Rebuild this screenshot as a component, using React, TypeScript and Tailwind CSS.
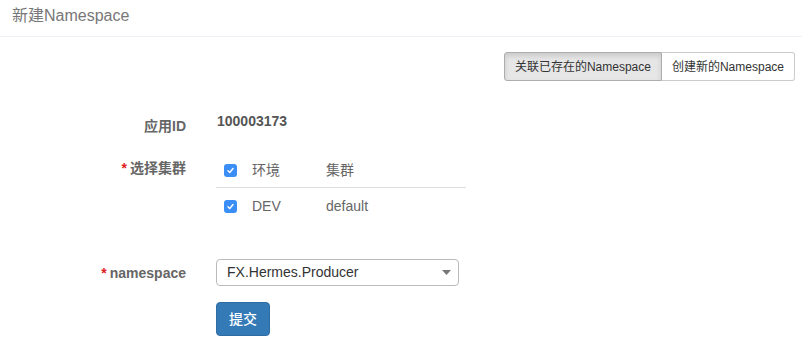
import React from "react";

function Check() {
  return (
    <span className="inline-flex w-[13px] h-[13px] rounded-[3px] bg-[#3a8ef6] items-center justify-center">
      <svg width="9" height="9" viewBox="0 0 10 10">
        <path d="M2.2 5.3 L4.2 7.3 L7.8 2.8" fill="none" stroke="#fff" strokeWidth="1.6" strokeLinecap="round" strokeLinejoin="round" />
      </svg>
    </span>
  );
}

export default function App() {
  return (
    <div className="w-[802px] h-[344px] bg-white overflow-hidden font-['Liberation_Sans','Noto_Sans_CJK_SC',sans-serif]">
      <div className="h-[36px] box-content border-b border-[#eef0f5] pl-[12px] pt-0">
        <div className="pt-[6px] text-[16px] leading-[20px] text-[#777]">新建Namespace</div>
      </div>

      <div className="flex justify-end pr-[7px] mt-[15px]">
        <div className="flex text-[12px] leading-[18px] text-[#333]">
          <button className="h-[29px] px-[10px] bg-[#e6e6e6] border border-[#adadad] rounded-l-[3px] shadow-[inset_0_3px_5px_rgba(0,0,0,0.125)]">
            关联已存在的Namespace
          </button>
          <button className="h-[29px] px-[10px] bg-white border border-l-0 border-[#ccc] rounded-r-[3px]">
            创建新的Namespace
          </button>
        </div>
      </div>

      <div className="mt-[30px]">
        <div className="flex">
          <div className="w-[186px] text-right pt-[5px] text-[14px] leading-[20px] font-bold text-[#666]">应用ID</div>
          <div className="ml-[31px] text-[14px] leading-[20px] font-bold text-[#555]">100003173</div>
        </div>

        <div className="flex mt-[17px]">
          <div className="w-[186px] text-right pt-[5px] text-[14px] leading-[20px] font-bold text-[#666]">
            <span className="text-[#e02020] mr-[3px]">*</span>选择集群
          </div>
          <div className="ml-[30px] w-[250px] text-[14px] text-[#666]">
            <div className="flex items-center h-[35px] pt-[1px] border-b border-[#ddd]">
              <div className="w-[36px] pl-[8px] flex items-center"><Check /></div>
              <div className="w-[74px]">环境</div>
              <div>集群</div>
            </div>
            <div className="flex items-center h-[36px]">
              <div className="w-[36px] pl-[8px] flex items-center"><Check /></div>
              <div className="w-[74px]">DEV</div>
              <div>default</div>
            </div>
          </div>
        </div>

        <div className="flex mt-[35px]">
          <div className="w-[186px] text-right pt-[4px] text-[14px] leading-[20px] font-bold text-[#666]">
            <span className="text-[#e02020] mr-[3px]">*</span>namespace
          </div>
          <div className="ml-[30px]">
            <div className="w-[243px] h-[27px] border border-[#bbb] rounded-[4px] flex items-center justify-between pl-[10px] pr-[7px] text-[14px] text-[#333] bg-white">
              <span>FX.Hermes.Producer</span>
              <svg width="9" height="5" viewBox="0 0 9 5"><path d="M0 0 L9 0 L4.5 5 Z" fill="#777" /></svg>
            </div>
            <button className="mt-[16px] h-[34px] px-[12px] bg-[#337ab7] border border-[#2e6da4] rounded-[4px] text-white text-[14px] font-medium">
              提交
            </button>
          </div>
        </div>
      </div>
    </div>
  );
}
